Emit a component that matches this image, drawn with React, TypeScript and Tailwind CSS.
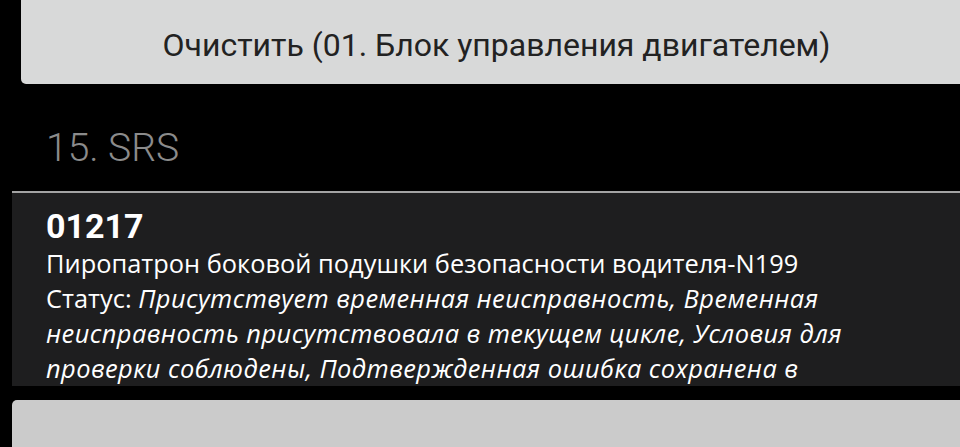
import React from "react";

export default function App() {
  return (
    <div className="w-[960px] h-[447px] overflow-hidden bg-black relative">
      <div className="w-[990px] flex flex-col">
        <div className="ml-[21px] w-[951px] h-[84px] bg-[#d8d9d9] rounded-bl-[5px] flex items-center justify-center pt-[6px]">
          <span className="text-[32px] text-[#222222]" style={{ fontFamily: "Roboto, 'Noto Sans', sans-serif" }}>
            Очистить (01. Блок управления двигателем)
          </span>
        </div>
        <div className="h-[107px] pl-[46px] pt-[41px]">
          <span className="text-[39px] leading-[46px] text-[#8b8b8b] font-light" style={{ fontFamily: "Roboto, sans-serif" }}>
            15. SRS
          </span>
        </div>
        <div className="ml-[12px] w-[960px] h-[2px] bg-[#a3a3a3]" />
        <div className="ml-[12px] w-[960px] h-[193px] bg-[#1e1e1f] pl-[34px] pt-[13px] overflow-hidden">
          <div className="text-[34px] leading-[40px] font-bold text-white" style={{ fontFamily: "Roboto, sans-serif" }}>
            01217
          </div>
          <div className="w-[900px] text-[25.4px] leading-[35px] text-white" style={{ fontFamily: "'Open Sans', sans-serif" }}>
            <div>Пиропатрон боковой подушки безопасности водителя-N199</div>
            <div>
              Статус: <i className="tracking-[0.45px]">Присутствует временная неисправность, Временная<br />неисправность присутствовала в текущем цикле, Условия для<br />проверки соблюдены, Подтвержденная ошибка сохранена в</i>
            </div>
          </div>
        </div>
        <div className="h-[14px]" />
        <div className="ml-[12px] w-[960px] h-[60px] bg-[#cbcbcb] rounded-tl-[5px]" />
      </div>
    </div>
  );
}
